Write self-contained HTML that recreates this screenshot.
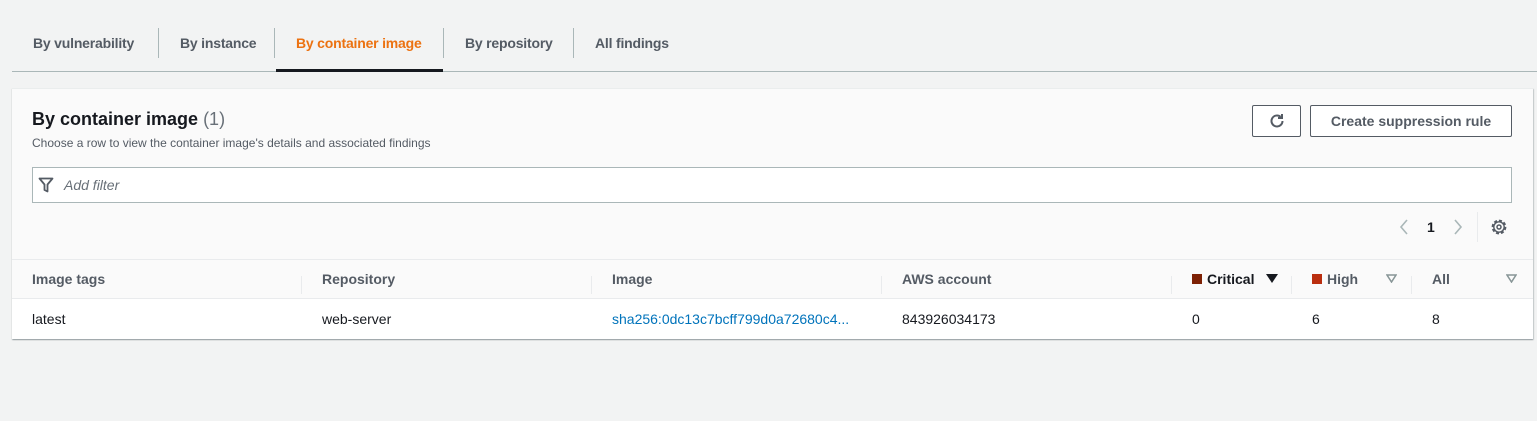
<!DOCTYPE html>
<html><head><style>
*{margin:0;padding:0;box-sizing:border-box}
body{width:1537px;height:421px;background:#f2f3f3;font-family:"Liberation Sans",sans-serif;position:relative;overflow:hidden;color:#16191f}
.a{position:absolute;white-space:nowrap}
.tab{font-size:14px;font-weight:bold;color:#545b64;top:35px;letter-spacing:-0.2px}
.sep{position:absolute;top:28px;width:1px;height:30px;background:#aab7b8}
.th{font-size:14px;font-weight:bold;color:#545b64;top:271px}
.td{font-size:14px;top:311px;color:#16191f}
.cs{position:absolute;top:276px;width:1px;height:18px;background:#e9ebed}
</style></head><body>
<div class="a tab" style="left:33px">By vulnerability</div>
<div class="sep" style="left:158px"></div>
<div class="a tab" style="left:180px">By instance</div>
<div class="sep" style="left:274px"></div>
<div class="a tab" style="left:296px;color:#ec7211">By container image</div>
<div class="sep" style="left:443px"></div>
<div class="a tab" style="left:465px">By repository</div>
<div class="sep" style="left:573px"></div>
<div class="a tab" style="left:595px">All findings</div>
<div class="a" style="left:12px;top:71px;width:1525px;height:1px;background:#aab7b8"></div>
<div class="a" style="left:276px;top:69px;width:167px;height:3px;background:#16191f"></div>

<div class="a" style="left:12px;top:88px;width:1521px;height:251px;background:#fafafa;box-shadow:0 1px 1px rgba(0,28,36,.3),1px 1px 1px rgba(0,28,36,.15);border-top:1px solid #eaeded"></div>
<div class="a" style="left:12px;top:298px;width:1521px;height:41px;background:#fff;border-top:1px solid #e9ebed"></div>
<div class="a" style="left:12px;top:259px;width:1521px;height:1px;background:#e9ebed"></div>

<div class="a" style="left:32px;top:109px;font-size:18px;font-weight:bold">By container image <span style="font-weight:normal;color:#687078">(1)</span></div>
<div class="a" style="left:32px;top:136px;font-size:12px;color:#545b64">Choose a row to view the container image's details and associated findings</div>

<div class="a" style="left:1252px;top:105px;width:49px;height:32px;border:1px solid #545b64;border-radius:2px;background:#fff"></div>
<svg class="a" style="left:1268px;top:112px" width="18" height="18" viewBox="0 0 18 18"><path d="M14.5 9a5.5 5.5 0 1 1-1.8-4.1" fill="none" stroke="#545b64" stroke-width="2"/><path d="M14 2v4h-4" fill="none" stroke="#545b64" stroke-width="2"/></svg>
<div class="a" style="left:1310px;top:105px;width:202px;height:32px;border:1px solid #545b64;border-radius:2px;background:#fff;font-size:14px;font-weight:bold;color:#545b64;text-align:center;line-height:30px">Create suppression rule</div>

<div class="a" style="left:32px;top:167px;width:1480px;height:36px;border:1px solid #aab7b8;background:#fff"></div>
<svg class="a" style="left:38px;top:177px" width="16" height="16" viewBox="0 0 16 16"><path d="M1.5 1.5h13l-5 6v7l-3-1.5v-5.5z" fill="none" stroke="#545b64" stroke-width="1.8" stroke-linejoin="round"/></svg>
<div class="a" style="left:64px;top:177px;font-size:14px;font-style:italic;color:#687078">Add filter</div>

<svg class="a" style="left:1398px;top:219px" width="12" height="16" viewBox="0 0 12 16"><path d="M9 1L3 8l6 7" fill="none" stroke="#aab7b8" stroke-width="1.6"/></svg>
<div class="a" style="left:1427px;top:219px;font-size:14px;font-weight:bold">1</div>
<svg class="a" style="left:1452px;top:219px" width="12" height="16" viewBox="0 0 12 16"><path d="M3 1l6 7-6 7" fill="none" stroke="#aab7b8" stroke-width="1.6"/></svg>
<div class="a" style="left:1477px;top:212px;width:1px;height:30px;background:#e9ebed"></div>
<svg class="a" style="left:1490px;top:218px" width="18" height="18" viewBox="0 0 18 18"><circle cx="9" cy="9" r="6.3" fill="none" stroke="#545b64" stroke-width="2.2" stroke-dasharray="3 1.9"/><circle cx="9" cy="9" r="5.2" fill="none" stroke="#545b64" stroke-width="1.4"/><circle cx="9" cy="9" r="2" fill="none" stroke="#545b64" stroke-width="1.5"/></svg>

<div class="a th" style="left:32px">Image tags</div>
<div class="cs" style="left:301px"></div>
<div class="a th" style="left:322px">Repository</div>
<div class="cs" style="left:591px"></div>
<div class="a th" style="left:612px">Image</div>
<div class="cs" style="left:881px"></div>
<div class="a th" style="left:902px">AWS account</div>
<div class="cs" style="left:1171px"></div>
<div class="a" style="left:1192px;top:274px;width:10px;height:10px;background:#7d2105"></div>
<div class="a th" style="left:1207px;color:#16191f">Critical</div>
<svg class="a" style="left:1266px;top:274px" width="12" height="10"><path d="M0 0h12L6 9z" fill="#16191f"/></svg>
<div class="cs" style="left:1291px"></div>
<div class="a" style="left:1312px;top:274px;width:10px;height:10px;background:#ba2e0f"></div>
<div class="a th" style="left:1327px">High</div>
<svg class="a" style="left:1386px;top:274px" width="11" height="9"><path d="M1 1h9L5.5 8z" fill="none" stroke="#879596" stroke-width="1.5"/></svg>
<div class="cs" style="left:1411px"></div>
<div class="a th" style="left:1432px">All</div>
<svg class="a" style="left:1506px;top:274px" width="11" height="9"><path d="M1 1h9L5.5 8z" fill="none" stroke="#879596" stroke-width="1.5"/></svg>

<div class="a td" style="left:32px">latest</div>
<div class="a td" style="left:322px">web-server</div>
<div class="a td" style="left:612px;color:#0073bb">sha256:0dc13c7bcff799d0a72680c4...</div>
<div class="a td" style="left:902px">843926034173</div>
<div class="a td" style="left:1192px">0</div>
<div class="a td" style="left:1312px">6</div>
<div class="a td" style="left:1432px">8</div>
</body></html>
